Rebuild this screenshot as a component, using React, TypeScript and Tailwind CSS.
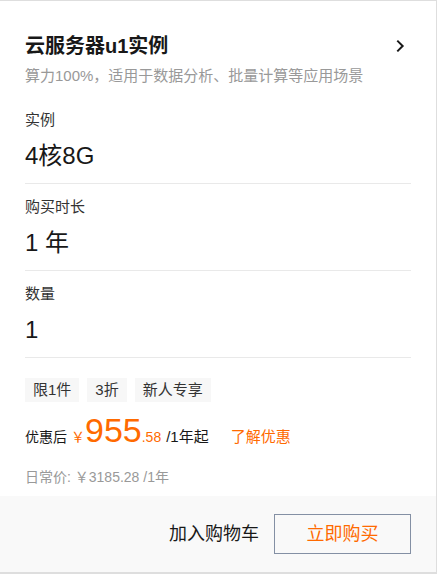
import { useState } from "react";

const sections = [
  { label: "实例", value: "4核8G" },
  { label: "购买时长", value: "1 年" },
  { label: "数量", value: "1" },
];

const tags = ["限1件", "3折", "新人专享"];

export default function App() {
  const [qty] = useState(1);

  return (
    <div className="w-[437px] h-[574px] flex flex-col bg-white border-t border-r border-b-2 border-[#dedede] font-['Liberation_Sans','Noto_Sans_CJK_SC',sans-serif] text-[#181818]">
      <div className="flex-1 px-[25px] pt-[32px]">
        <div className="flex items-center justify-between">
          <h1 className="text-[20px] leading-[26px] font-bold">云服务器u1实例</h1>
          <svg
            className="mr-[3px] h-[16px] w-[16px]"
            viewBox="0 0 24 24"
            fill="none"
            stroke="#181818"
            strokeWidth="3"
            strokeLinecap="square"
          >
            <path d="M9 5l7 7-7 7" />
          </svg>
        </div>
        <p className="mt-[7px] text-[15px] leading-[20px] text-[#999]">
          算力100%，适用于数据分析、批量计算等应用场景
        </p>

        {sections.map((s, i) => (
          <div
            key={s.label}
            className={`border-b border-[#e9e9e9] pb-[12px] ${i === 0 ? "pt-[24px]" : "pt-[13px]"}`}
          >
            <div className="text-[15px] leading-[20px] text-[#333]">{s.label}</div>
            <div className="mt-[11px] text-[24px] leading-[30px]">
              {s.label === "数量" ? qty : s.value}
            </div>
          </div>
        ))}

        <div className="mt-[20px] flex gap-[8px]">
          {tags.map((t) => (
            <span
              key={t}
              className="h-[24px] px-[8px] bg-[#f7f7f7] text-[15px] leading-[24px] text-[#333]"
            >
              {t}
            </span>
          ))}
        </div>

        <div className="mt-[8px] flex items-baseline leading-[40px]">
          <span className="text-[14px] text-[#181818]">优惠后</span>
          <span className="ml-[4px] text-[14px] text-[#ff6a00] font-['Noto_Sans_CJK_SC',sans-serif]">￥</span>
          <span className="text-[34px] text-[#ff6a00]">955</span>
          <span className="text-[14px] text-[#ff6a00]">.58</span>
          <span className="ml-[5px] text-[15px] text-[#181818]">/1年起</span>
          <a className="ml-[22px] text-[15px] text-[#ff6a00]">了解优惠</a>
        </div>

        <div className="mt-[9px] text-[14px] leading-[20px] text-[#999]">
          日常价: <span className="font-['Noto_Sans_CJK_SC',sans-serif]">￥</span>3185.28 /1年
        </div>
      </div>

      <div className="h-[76px] px-[25px] bg-[#f9f9f9] flex items-center justify-end gap-[15px]">
        <button className="text-[18px] text-[#181818]">加入购物车</button>
        <button className="w-[137px] h-[40px] border border-[#8490a4] text-[18px] text-[#ff6a00]">
          立即购买
        </button>
      </div>
    </div>
  );
}
